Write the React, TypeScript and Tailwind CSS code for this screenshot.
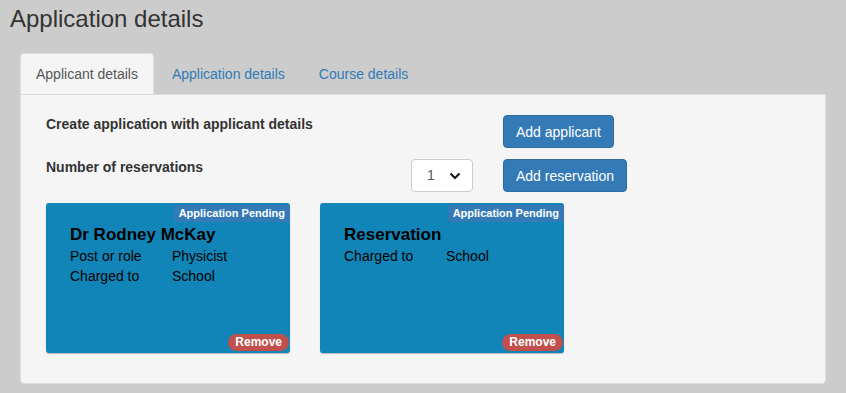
import { useState } from "react";

type Card = {
  title: string;
  rows: Array<[string, string]>;
};

const CARDS: Card[] = [
  {
    title: "Dr Rodney McKay",
    rows: [
      ["Post or role", "Physicist"],
      ["Charged to", "School"],
    ],
  },
  {
    title: "Reservation",
    rows: [["Charged to", "School"]],
  },
];

const TABS = ["Applicant details", "Application details", "Course details"];

function DetailCard({ card }: { card: Card }) {
  return (
    <div className="relative h-[150px] w-[244px] rounded-[3px] bg-[#1185b8] pl-[24px] pt-[21px] shadow-[0_1px_1px_rgba(0,0,0,0.25)]">
      <span className="absolute right-0 top-[2px] rounded-l-[3px] bg-[#337ab7] px-[5px] text-[11px] font-bold leading-[17px] text-white">
        Application Pending
      </span>
      <h3 className="text-[17px] font-bold leading-[22px] text-black">{card.title}</h3>
      {card.rows.map(([label, value]) => (
        <div key={label} className="flex text-[14px] leading-[20px] text-black">
          <span className="w-[102px]">{label}</span>
          <span>{value}</span>
        </div>
      ))}
      <span className="absolute bottom-[2px] right-[1px] rounded-full bg-[#c14f4c] px-[7px] text-[12px] font-bold leading-[17px] text-white">
        Remove
      </span>
    </div>
  );
}

export default function App() {
  const [tab, setTab] = useState(0);

  return (
    <div
      className="h-[393px] bg-[#cccccc] text-[#333]"
      style={{ fontFamily: '"Liberation Sans", Arial, sans-serif' }}
    >
      <h1 className="pl-[10px] pt-[6px] text-[24px] font-normal leading-[26px] text-[#333]">
        Application details
      </h1>

      <div className="px-[20px] pt-[21px]">
        <ul className="flex">
          {TABS.map((t, i) => (
            <li key={t} className="-mb-px mr-[2px]">
              <button
                type="button"
                onClick={() => setTab(i)}
                className={
                  i === tab
                    ? "rounded-t-[4px] border border-b-0 border-[#ddd] bg-[#f5f5f5] px-[15px] py-[10px] text-[14px] leading-[20px] text-[#555]"
                    : "rounded-t-[4px] border border-transparent px-[15px] py-[10px] text-[14px] leading-[20px] text-[#337ab7]"
                }
              >
                {t}
              </button>
            </li>
          ))}
        </ul>

        <div className="rounded-b-[4px] border border-[#ddd] bg-[#f5f5f5] px-[25px] pb-[30px] pt-[20px]">
          <div className="flex">
            <p className="mt-[-1px] w-[365px] text-[14px] font-bold leading-[20px] text-[#333]">
              Create application with applicant details
            </p>
            <div className="w-[92px]" />
            <button
              type="button"
              className="h-[33px] rounded-[4px] border border-[#2e6da4] bg-[#337ab7] px-[12px] text-[14px] leading-[20px] text-white"
            >
              Add applicant
            </button>
          </div>

          <div className="mt-[11px] flex">
            <p className="mt-[-2px] w-[365px] text-[14px] font-bold leading-[20px] text-[#333]">
              Number of reservations
            </p>
            <div className="flex h-[33px] w-[62px] items-center rounded-[4px] border border-[#ccc] bg-white pl-[15px] text-[14px] text-[#555]">
              <span>1</span>
              <svg width="12" height="8" viewBox="0 0 12 8" className="ml-[14px]">
                <path d="M1.5 1.5 L6 6 L10.5 1.5" fill="none" stroke="#111" strokeWidth="2" />
              </svg>
            </div>
            <div className="w-[30px]" />
            <button
              type="button"
              className="h-[33px] rounded-[4px] border border-[#2e6da4] bg-[#337ab7] px-[12px] text-[14px] leading-[20px] text-white"
            >
              Add reservation
            </button>
          </div>

          <div className="mt-[11px] flex gap-[30px]">
            {CARDS.map((c) => (
              <DetailCard key={c.title} card={c} />
            ))}
          </div>
        </div>
      </div>
    </div>
  );
}
